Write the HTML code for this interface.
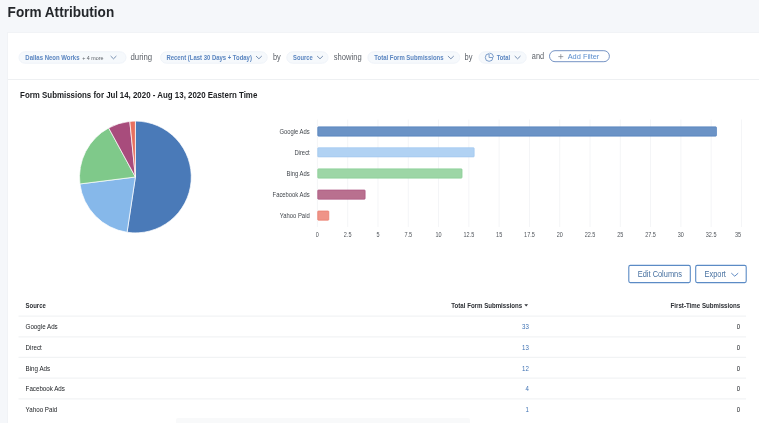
<!DOCTYPE html>
<html>
<head>
<meta charset="utf-8">
<title>Form Attribution</title>
<style>
*{box-sizing:border-box;margin:0;padding:0}
html,body{width:759px;height:423px;overflow:hidden;background:#f5f7fa;font-family:"Liberation Sans",sans-serif}
.a{position:absolute}
</style>
</head>
<body>
<div class="a" style="left:7px;top:32px;width:752px;height:391px;background:#fff;border:1px solid #f1f3f6;border-right:0;border-bottom:0"></div>
<div class="a" style="left:8px;top:79px;width:751px;height:1px;background:#eef0f2"></div>
<div class="a" style="left:176px;top:418px;width:294px;height:5px;background:#f8f9fa;border-radius:2px 2px 0 0"></div>
<svg class="a" style="left:0;top:0;will-change:transform" width="759" height="423" viewBox="0 0 759 423" font-family="Liberation Sans, sans-serif">
<path d="M741.46 119.5 V227" stroke="#f4f5f7" stroke-width="1" fill="none"/>
<path d="M711.17 119.5 V227" stroke="#f4f5f7" stroke-width="1" fill="none"/>
<path d="M680.88 119.5 V227" stroke="#f4f5f7" stroke-width="1" fill="none"/>
<path d="M650.59 119.5 V227" stroke="#f4f5f7" stroke-width="1" fill="none"/>
<path d="M620.30 119.5 V227" stroke="#f4f5f7" stroke-width="1" fill="none"/>
<path d="M590.01 119.5 V227" stroke="#f4f5f7" stroke-width="1" fill="none"/>
<path d="M559.72 119.5 V227" stroke="#f4f5f7" stroke-width="1" fill="none"/>
<path d="M529.43 119.5 V227" stroke="#f4f5f7" stroke-width="1" fill="none"/>
<path d="M499.14 119.5 V227" stroke="#f4f5f7" stroke-width="1" fill="none"/>
<path d="M468.85 119.5 V227" stroke="#f4f5f7" stroke-width="1" fill="none"/>
<path d="M438.56 119.5 V227" stroke="#f4f5f7" stroke-width="1" fill="none"/>
<path d="M408.27 119.5 V227" stroke="#f4f5f7" stroke-width="1" fill="none"/>
<path d="M377.98 119.5 V227" stroke="#f4f5f7" stroke-width="1" fill="none"/>
<path d="M347.69 119.5 V227" stroke="#f4f5f7" stroke-width="1" fill="none"/>
<path d="M317.40 119.5 V227" stroke="#f4f5f7" stroke-width="1" fill="none"/>
<rect x="19.00" y="51.8" width="107.00" height="11.4" rx="5.7" fill="#f6f9fc" stroke="#eff3f9" stroke-width="1"/>
<path d="M110.90 56.30 L113.50 58.80 L116.10 56.30" fill="none" stroke="#6a83a8" stroke-width="0.9" stroke-linecap="round" stroke-linejoin="round"/>
<rect x="160.60" y="51.8" width="106.60" height="11.4" rx="5.7" fill="#f6f9fc" stroke="#eff3f9" stroke-width="1"/>
<path d="M256.30 56.30 L258.90 58.80 L261.50 56.30" fill="none" stroke="#6a83a8" stroke-width="0.9" stroke-linecap="round" stroke-linejoin="round"/>
<rect x="286.80" y="51.8" width="41.30" height="11.4" rx="5.7" fill="#f6f9fc" stroke="#eff3f9" stroke-width="1"/>
<path d="M317.40 56.30 L320.00 58.80 L322.60 56.30" fill="none" stroke="#6a83a8" stroke-width="0.9" stroke-linecap="round" stroke-linejoin="round"/>
<rect x="367.90" y="51.8" width="91.90" height="11.4" rx="5.7" fill="#f6f9fc" stroke="#eff3f9" stroke-width="1"/>
<path d="M448.20 56.30 L450.85 58.80 L453.50 56.30" fill="none" stroke="#6a83a8" stroke-width="0.9" stroke-linecap="round" stroke-linejoin="round"/>
<rect x="479.00" y="51.8" width="47.20" height="11.4" rx="5.7" fill="#f6f9fc" stroke="#eff3f9" stroke-width="1"/>
<path d="M515.00 56.30 L517.60 58.80 L520.20 56.30" fill="none" stroke="#6a83a8" stroke-width="0.9" stroke-linecap="round" stroke-linejoin="round"/>
<path d="M489.10 53.70 A3.8 3.8 0 1 0 492.90 57.50 L489.10 57.50 Z" fill="none" stroke="#5f86bd" stroke-width="0.8" stroke-linejoin="round"/>
<path d="M490.00 53.10 A3.8 3.8 0 0 1 493.50 56.60" fill="none" stroke="#5f86bd" stroke-width="0.8" stroke-linecap="round"/>
<rect x="549.5" y="50.7" width="59.9" height="11" rx="5.5" fill="#fff" stroke="#7593c4" stroke-width="1"/>
<path d="M558.3 56.6 H563.3 M560.8 54.1 V59.1" stroke="#7b8087" stroke-width="0.7" fill="none"/>
<path d="M135.4 177.0 L135.40 121.10 A55.9 55.9 0 1 1 127.07 232.28 Z" fill="#4a7ab8" stroke="#fff" stroke-width="0.7" stroke-linejoin="round"/>
<path d="M135.4 177.0 L127.07 232.28 A55.9 55.9 0 0 1 79.93 183.95 Z" fill="#86b8ea" stroke="#fff" stroke-width="0.7" stroke-linejoin="round"/>
<path d="M135.4 177.0 L79.93 183.95 A55.9 55.9 0 0 1 108.67 127.91 Z" fill="#7fc98a" stroke="#fff" stroke-width="0.7" stroke-linejoin="round"/>
<path d="M135.4 177.0 L108.67 127.91 A55.9 55.9 0 0 1 129.83 121.38 Z" fill="#a84c7c" stroke="#fff" stroke-width="0.7" stroke-linejoin="round"/>
<path d="M135.4 177.0 L129.83 121.38 A55.9 55.9 0 0 1 135.40 121.10 Z" fill="#e8705f" stroke="#fff" stroke-width="0.7" stroke-linejoin="round"/>
<rect x="317.70" y="126.85" width="398.83" height="9.3" rx="0.8" fill="#6b93c6" stroke="#4a7ab8" stroke-width="0.6"/>
<rect x="317.70" y="147.65" width="156.51" height="9.3" rx="0.8" fill="#b1d2f3" stroke="#9cc4ee" stroke-width="0.6"/>
<rect x="317.70" y="168.85" width="144.39" height="9.3" rx="0.8" fill="#9dd6a6" stroke="#86cc92" stroke-width="0.6"/>
<rect x="317.70" y="189.95" width="47.46" height="9.3" rx="0.8" fill="#b9708f" stroke="#a84c7c" stroke-width="0.6"/>
<rect x="317.70" y="210.95" width="11.12" height="9.3" rx="0.8" fill="#ef9488" stroke="#e8705f" stroke-width="0.6"/>
<rect x="628.8" y="265.4" width="61.5" height="17.2" rx="1.5" fill="#fff" stroke="#5b8bc5" stroke-width="1.1"/>
<rect x="695.7" y="265.4" width="50.5" height="17.2" rx="1.5" fill="#fff" stroke="#5b8bc5" stroke-width="1.1"/>
<path d="M731.60 273.40 L734.75 276.20 L737.90 273.40" fill="none" stroke="#4d7dbb" stroke-width="0.9" stroke-linecap="round" stroke-linejoin="round"/>
<path d="M524.3 304.2 H528.1 L526.2 306.6 Z" fill="#33363b"/>
<rect x="18.5" y="315.60" width="727.6" height="1" fill="#eef0f2"/>
<rect x="18.5" y="336.40" width="727.6" height="1" fill="#eef0f2"/>
<rect x="18.5" y="356.80" width="727.6" height="1" fill="#eef0f2"/>
<rect x="18.5" y="377.60" width="727.6" height="1" fill="#eef0f2"/>
<rect x="18.5" y="398.40" width="727.6" height="1" fill="#eef0f2"/>
<text x="7.60" y="16.90" font-size="15.5" font-weight="bold" fill="#24272b" textLength="106.60" lengthAdjust="spacingAndGlyphs">Form Attribution</text>
<text x="25.30" y="60.00" font-size="7.0" font-weight="bold" fill="#5a85c0" textLength="54.20" lengthAdjust="spacingAndGlyphs">Dallas Neon Works</text>
<text x="82.20" y="60.00" font-size="6.1" font-weight="normal" fill="#5d6269" textLength="21.30" lengthAdjust="spacingAndGlyphs">+ 4 more</text>
<text x="130.50" y="59.80" font-size="8.2" font-weight="normal" fill="#5c6168" textLength="21.70" lengthAdjust="spacingAndGlyphs">during</text>
<text x="166.40" y="60.00" font-size="7.0" font-weight="bold" fill="#5a85c0" textLength="85.50" lengthAdjust="spacingAndGlyphs">Recent (Last 30 Days + Today)</text>
<text x="272.90" y="59.80" font-size="8.2" font-weight="normal" fill="#5c6168" textLength="7.80" lengthAdjust="spacingAndGlyphs">by</text>
<text x="293.00" y="60.00" font-size="7.0" font-weight="bold" fill="#5a85c0" textLength="19.70" lengthAdjust="spacingAndGlyphs">Source</text>
<text x="333.70" y="59.80" font-size="8.2" font-weight="normal" fill="#5c6168" textLength="28.00" lengthAdjust="spacingAndGlyphs">showing</text>
<text x="374.30" y="60.00" font-size="7.0" font-weight="bold" fill="#5a85c0" textLength="69.20" lengthAdjust="spacingAndGlyphs">Total Form Submissions</text>
<text x="464.60" y="59.80" font-size="8.2" font-weight="normal" fill="#5c6168" textLength="7.90" lengthAdjust="spacingAndGlyphs">by</text>
<text x="496.70" y="60.00" font-size="7.0" font-weight="bold" fill="#5a85c0" textLength="13.40" lengthAdjust="spacingAndGlyphs">Total</text>
<text x="531.80" y="59.00" font-size="8.2" font-weight="normal" fill="#5c6168" textLength="12.30" lengthAdjust="spacingAndGlyphs">and</text>
<text x="567.70" y="59.30" font-size="7.6" font-weight="normal" fill="#5a8dce" textLength="31.60" lengthAdjust="spacingAndGlyphs">Add Filter</text>
<text x="20.10" y="97.70" font-size="9.5" font-weight="bold" fill="#1b1d20" textLength="237.20" lengthAdjust="spacingAndGlyphs">Form Submissions for Jul 14, 2020 - Aug 13, 2020 Eastern Time</text>
<text x="315.87" y="237.00" font-size="6.55" font-weight="normal" fill="#50555b" textLength="3.06" lengthAdjust="spacingAndGlyphs">0</text>
<text x="343.86" y="237.00" font-size="6.55" font-weight="normal" fill="#50555b" textLength="7.66" lengthAdjust="spacingAndGlyphs">2.5</text>
<text x="376.45" y="237.00" font-size="6.55" font-weight="normal" fill="#50555b" textLength="3.06" lengthAdjust="spacingAndGlyphs">5</text>
<text x="404.44" y="237.00" font-size="6.55" font-weight="normal" fill="#50555b" textLength="7.66" lengthAdjust="spacingAndGlyphs">7.5</text>
<text x="435.50" y="237.00" font-size="6.55" font-weight="normal" fill="#50555b" textLength="6.13" lengthAdjust="spacingAndGlyphs">10</text>
<text x="463.49" y="237.00" font-size="6.55" font-weight="normal" fill="#50555b" textLength="10.72" lengthAdjust="spacingAndGlyphs">12.5</text>
<text x="496.08" y="237.00" font-size="6.55" font-weight="normal" fill="#50555b" textLength="6.13" lengthAdjust="spacingAndGlyphs">15</text>
<text x="524.07" y="237.00" font-size="6.55" font-weight="normal" fill="#50555b" textLength="10.72" lengthAdjust="spacingAndGlyphs">17.5</text>
<text x="556.66" y="237.00" font-size="6.55" font-weight="normal" fill="#50555b" textLength="6.13" lengthAdjust="spacingAndGlyphs">20</text>
<text x="584.65" y="237.00" font-size="6.55" font-weight="normal" fill="#50555b" textLength="10.72" lengthAdjust="spacingAndGlyphs">22.5</text>
<text x="617.24" y="237.00" font-size="6.55" font-weight="normal" fill="#50555b" textLength="6.13" lengthAdjust="spacingAndGlyphs">25</text>
<text x="645.23" y="237.00" font-size="6.55" font-weight="normal" fill="#50555b" textLength="10.72" lengthAdjust="spacingAndGlyphs">27.5</text>
<text x="677.82" y="237.00" font-size="6.55" font-weight="normal" fill="#50555b" textLength="6.13" lengthAdjust="spacingAndGlyphs">30</text>
<text x="705.81" y="237.00" font-size="6.55" font-weight="normal" fill="#50555b" textLength="10.72" lengthAdjust="spacingAndGlyphs">32.5</text>
<text x="735.00" y="237.00" font-size="6.55" font-weight="normal" fill="#50555b" textLength="6.13" lengthAdjust="spacingAndGlyphs">35</text>
<text x="279.41" y="134.00" font-size="7.1" font-weight="normal" fill="#42474d" textLength="30.29" lengthAdjust="spacingAndGlyphs">Google Ads</text>
<text x="294.40" y="154.80" font-size="7.1" font-weight="normal" fill="#42474d" textLength="15.30" lengthAdjust="spacingAndGlyphs">Direct</text>
<text x="286.57" y="176.00" font-size="7.1" font-weight="normal" fill="#42474d" textLength="23.13" lengthAdjust="spacingAndGlyphs">Bing Ads</text>
<text x="272.57" y="197.10" font-size="7.1" font-weight="normal" fill="#42474d" textLength="37.13" lengthAdjust="spacingAndGlyphs">Facebook Ads</text>
<text x="279.84" y="218.10" font-size="7.1" font-weight="normal" fill="#42474d" textLength="29.86" lengthAdjust="spacingAndGlyphs">Yahoo Paid</text>
<text x="637.80" y="277.20" font-size="8.7" font-weight="normal" fill="#456f9f" textLength="44.10" lengthAdjust="spacingAndGlyphs">Edit Columns</text>
<text x="704.60" y="277.20" font-size="8.7" font-weight="normal" fill="#456f9f" textLength="21.30" lengthAdjust="spacingAndGlyphs">Export</text>
<text x="25.60" y="308.20" font-size="7.0" font-weight="bold" fill="#2b2e33" textLength="20.20" lengthAdjust="spacingAndGlyphs">Source</text>
<text x="451.30" y="307.50" font-size="7.0" font-weight="bold" fill="#2b2e33" textLength="70.90" lengthAdjust="spacingAndGlyphs">Total Form Submissions</text>
<text x="670.60" y="307.60" font-size="7.0" font-weight="bold" fill="#2b2e33" textLength="69.60" lengthAdjust="spacingAndGlyphs">First-Time Submissions</text>
<text x="25.60" y="329.40" font-size="7.2" font-weight="normal" fill="#202327" textLength="32.10" lengthAdjust="spacingAndGlyphs">Google Ads</text>
<text x="522.00" y="329.40" font-size="7.1" font-weight="normal" fill="#4073b4" textLength="6.80" lengthAdjust="spacingAndGlyphs">33</text>
<text x="736.80" y="329.40" font-size="7.1" font-weight="normal" fill="#202327" textLength="3.40" lengthAdjust="spacingAndGlyphs">0</text>
<text x="25.60" y="350.20" font-size="7.2" font-weight="normal" fill="#202327" textLength="16.21" lengthAdjust="spacingAndGlyphs">Direct</text>
<text x="522.00" y="350.20" font-size="7.1" font-weight="normal" fill="#4073b4" textLength="6.80" lengthAdjust="spacingAndGlyphs">13</text>
<text x="736.80" y="350.20" font-size="7.1" font-weight="normal" fill="#202327" textLength="3.40" lengthAdjust="spacingAndGlyphs">0</text>
<text x="25.60" y="370.60" font-size="7.2" font-weight="normal" fill="#202327" textLength="24.51" lengthAdjust="spacingAndGlyphs">Bing Ads</text>
<text x="522.00" y="370.60" font-size="7.1" font-weight="normal" fill="#4073b4" textLength="6.80" lengthAdjust="spacingAndGlyphs">12</text>
<text x="736.80" y="370.60" font-size="7.1" font-weight="normal" fill="#202327" textLength="3.40" lengthAdjust="spacingAndGlyphs">0</text>
<text x="25.60" y="391.40" font-size="7.2" font-weight="normal" fill="#202327" textLength="39.34" lengthAdjust="spacingAndGlyphs">Facebook Ads</text>
<text x="525.40" y="391.40" font-size="7.1" font-weight="normal" fill="#4073b4" textLength="3.40" lengthAdjust="spacingAndGlyphs">4</text>
<text x="736.80" y="391.40" font-size="7.1" font-weight="normal" fill="#202327" textLength="3.40" lengthAdjust="spacingAndGlyphs">0</text>
<text x="25.60" y="412.20" font-size="7.2" font-weight="normal" fill="#202327" textLength="31.64" lengthAdjust="spacingAndGlyphs">Yahoo Paid</text>
<text x="525.40" y="412.20" font-size="7.1" font-weight="normal" fill="#4073b4" textLength="3.40" lengthAdjust="spacingAndGlyphs">1</text>
<text x="736.80" y="412.20" font-size="7.1" font-weight="normal" fill="#202327" textLength="3.40" lengthAdjust="spacingAndGlyphs">0</text>
</svg>
</body>
</html>
